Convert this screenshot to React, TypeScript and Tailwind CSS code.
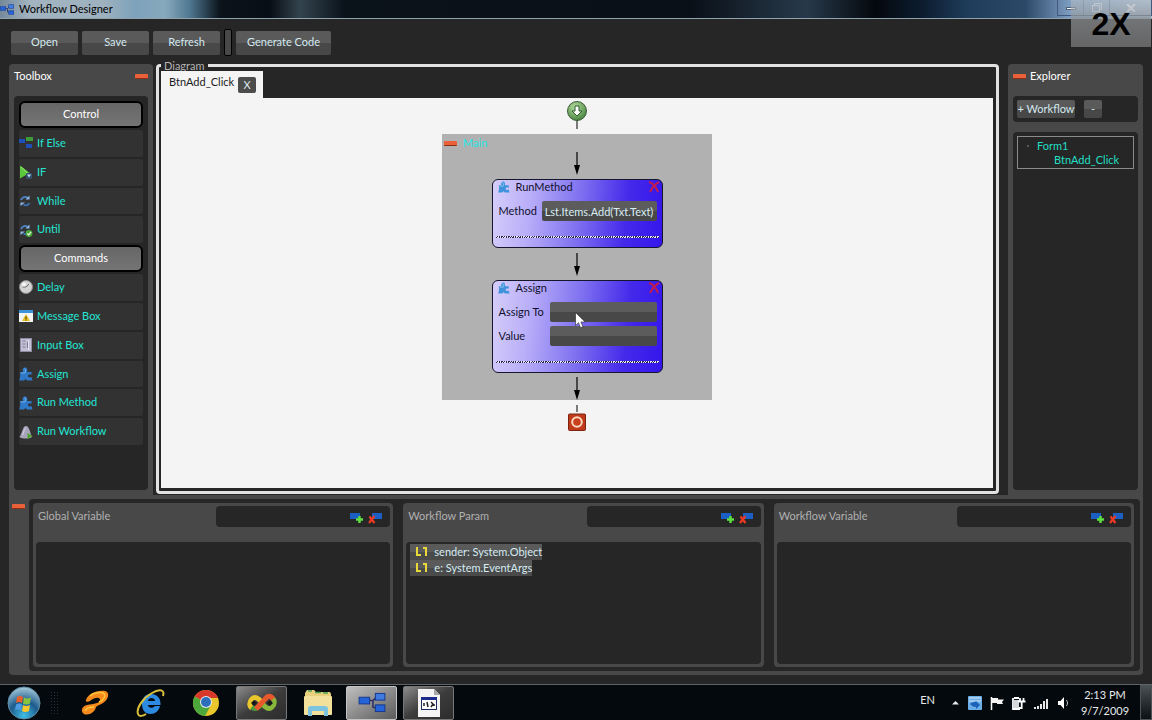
import { useState } from 'react';
import type { ReactNode } from 'react';

const CONTROLS = ['If Else', 'IF', 'While', 'Until'];
const COMMANDS = ['Delay', 'Message Box', 'Input Box', 'Assign', 'Run Method', 'Run Workflow'];

/* ---------- icons ---------- */

function FlowIcon({ className, accent = '#3f7be0' }: { className?: string; accent?: string }) {
  return (
    <svg viewBox="0 0 28 22" className={className} aria-hidden="true">
      <path d="M11 9h4M15 9l4-4M15 9v7l4 1" stroke="#2b2f66" strokeWidth="1.6" fill="none" />
      <rect x="0.5" y="5.5" width="11" height="7" fill="#2563d8" stroke="#14368c" />
      <rect x="17.5" y="1.5" width="10" height="7" fill={accent} stroke="#14368c" />
      <rect x="17.5" y="13.5" width="10" height="7" fill="#2563d8" stroke="#14368c" />
    </svg>
  );
}

function PuzzleIcon({ className, light }: { className?: string; light?: boolean }) {
  return (
    <svg viewBox="0 0 14 14" className={className} aria-hidden="true">
      <path
        d="M1 5h3C3 2.600 4.200 0.500 6 0.500s3 2.100 2 4.500h4.500v3c-1.800-.8-3.500-.4-3.500 1s1.700 1.800 3.500 1l1 3.500H8l-1.500-1.500L5 13.500H.3l1-4.500z"
        fill={light ? '#3f93dc' : '#2f78c8'}
      />
      <path d="M4.800 2.500c.6-.8 1.600-.6 2 .4L6 6H2" stroke={light ? '#8cc8f2' : '#6fb0ea'} fill="none" />
    </svg>
  );
}

function LoopIcon({ checked }: { checked?: boolean }) {
  return (
    <svg viewBox="0 0 14 14" className="size-[14px]" aria-hidden="true">
      <path d="M2 6c1.500-3 4.500-4 6.500-2" stroke="#4f86c6" strokeWidth="1.800" fill="none" />
      <path d="M6.500 5.500h4V1.500z" fill="#8ab4e6" />
      <path d="M10.500 9c-1.500 2.500-4 3-6 1.500" stroke="#3a70b4" strokeWidth="1.800" fill="none" />
      <path d="M6 8.500H1.500v3.500z" fill="#8ab4e6" />
      {checked && (
        <>
          <circle cx="10" cy="10.500" r="3.400" fill="#4aa53a" />
          <path d="M8.300 10.500l1.400 1.400 2.400-3" stroke="#e9ffe0" strokeWidth="1.200" fill="none" />
        </>
      )}
    </svg>
  );
}

function ToolIcon({ name }: { name: string }) {
  switch (name) {
    case 'If Else':
      return (
        <svg viewBox="0 0 14 14" className="size-[14px]" aria-hidden="true">
          <path d="M5 4.500h2v6h1M7 4.500V3" stroke="#2a2f4a" fill="none" />
          <rect x="0" y="3" width="6" height="4" fill="#1f4fb8" />
          <rect x="7" y="1" width="7" height="4" fill="#3f9a3a" />
          <rect x="7" y="8" width="6" height="4" fill="#1f4fb8" />
        </svg>
      );
    case 'IF':
      return (
        <svg viewBox="0 0 14 14" className="size-[14px]" aria-hidden="true">
          <path d="M1 0.500l11 8.500-5 1-6 3.500z" fill="#5cc83c" />
          <path d="M2 2l6 5.500" stroke="#a2ec7c" />
          <rect x="7" y="8" width="6" height="6" rx="1" fill="#35506e" />
          <path d="M8 9.500h4l-2 3z" fill="#c7ddf2" />
        </svg>
      );
    case 'While':
      return <LoopIcon />;
    case 'Until':
      return <LoopIcon checked />;
    case 'Delay':
      return (
        <svg viewBox="0 0 14 14" className="size-[14px]" aria-hidden="true">
          <circle cx="7" cy="7" r="6.500" fill="#d3d3d3" stroke="#8b8b8b" />
          <path d="M7 7l3-3M7 7H3.500" stroke="#6c6c6c" fill="none" />
          <circle cx="5" cy="4.500" r="2" fill="#f6f6f6" />
        </svg>
      );
    case 'Message Box':
      return (
        <svg viewBox="0 0 14 14" className="size-[14px]" aria-hidden="true">
          <rect x="0" y="1" width="14" height="12" fill="#f2f4f6" />
          <rect x="0" y="1" width="14" height="3" fill="#3d92dc" />
          <path d="M7 5l4 7H3z" fill="#e8c020" />
          <path d="M7 7.500v2.500M7 10.500v1" stroke="#3c3208" />
        </svg>
      );
    case 'Input Box':
      return (
        <svg viewBox="0 0 14 14" className="size-[14px]" aria-hidden="true">
          <rect x="1.500" y="0.500" width="11" height="13" fill="#c3bfd2" stroke="#8f8aa4" />
          <path d="M3.500 3h3M3.500 6h3M3.500 9h3M8.500 4v6" stroke="#7d7896" fill="none" />
          <path d="M9.500 2v10" stroke="#e6e3f0" />
        </svg>
      );
    case 'Run Workflow':
      return (
        <svg viewBox="0 0 14 14" className="size-[14px]" aria-hidden="true">
          <path d="M0.500 12C3 9 3.500 1 7 1s4 7 6 11c-3 2-10 2-12.500 0z" fill="#a9a3bb" />
          <path d="M3.500 10C5 7 5.500 3 7 3" stroke="#dcd8e8" fill="none" />
          <path d="M8.500 8l5 3-5 3z" fill="#4da52e" />
        </svg>
      );
    default:
      return <PuzzleIcon className="size-[14px]" />;
  }
}

function AddIcon() {
  return (
    <svg viewBox="0 0 14 12" className="h-3 w-[14px]" aria-hidden="true">
      <rect x="0" y="1" width="10" height="6" fill="#1c5fc4" />
      <path d="M9.500 4v7M6 7.500h7" stroke="#5ee040" strokeWidth="2.400" />
    </svg>
  );
}

function RemoveIcon() {
  return (
    <svg viewBox="0 0 14 12" className="h-3 w-[14px]" aria-hidden="true">
      <rect x="4" y="1" width="10" height="6" fill="#1c5fc4" />
      <path d="M1.500 4.500l5 6.500M6.500 4L1 11" stroke="#ee3a24" strokeWidth="2.200" />
    </svg>
  );
}

function CollapseButton({ label }: { label: string }) {
  return (
    <button
      aria-label={label}
      className="h-[5px] w-[13px] shrink-0 rounded-[1px] border-b border-[#8e2c12] bg-[#ea6038]"
    />
  );
}

/* ---------- shared pieces ---------- */

function GlossButton({ children, className = '' }: { children: ReactNode; className?: string }) {
  return (
    <button
      className={`flex items-center justify-center rounded-xs bg-linear-to-b from-[#5a5a5a] from-50% to-[#484848] to-50% text-[#d4e9f0] ${className}`}
    >
      {children}
    </button>
  );
}

function Arrow() {
  return (
    <svg viewBox="0 0 8 23" className="h-[23px] w-2" aria-hidden="true">
      <path d="M4 0v15" stroke="#000" strokeWidth="1.200" />
      <path d="M1 13h6L4 23z" fill="#000" />
    </svg>
  );
}

/* ---------- window chrome ---------- */

function TitleBar() {
  return (
    <header className="flex h-[19px] shrink-0 items-center justify-between border-b border-[#8fa3ae] bg-[linear-gradient(90deg,#75899a_0px,#a3b4c0_30px,#9db1bf_105px,#7da2bb_135px,#87a9bc_165px,#4f7790_190px,#0b131b_220px,#080e16_270px,#33434e_300px,#0a121a_345px,#0a1018_60%,#27394a_70%,#04080e_76%,#0c1c2e_80%,#1f3c5a_84%,#2c4968_89%,#7f9fc4_93%,#a9bfd6_100%)]">
      <div className="flex items-center gap-[5px]">
        <FlowIcon className="h-[11px] w-[14px]" />
        <h1 className="text-[11px] leading-4 text-black">Workflow Designer</h1>
      </div>
      <div className="flex h-4 w-[95px] self-start border-x border-b border-[#41597a] text-white">
        <button aria-label="Minimize" className="flex w-[26px] items-end justify-center border-r border-[#5f7898] pb-[5px]">
          <span className="h-[3px] w-[10px] border border-[#4c5f78] bg-white" />
        </button>
        <button aria-label="Restore" className="flex w-[26px] items-center justify-center border-r border-[#5f7898]">
          <svg viewBox="0 0 12 10" className="h-[10px] w-3" aria-hidden="true">
            <path d="M3.500 2V.5h7v6H9" stroke="#e6eef6" fill="none" />
            <rect x="1.500" y="2.500" width="7" height="6" stroke="#e6eef6" fill="none" />
          </svg>
        </button>
        <button aria-label="Close" className="flex flex-1 items-center justify-center">
          <svg viewBox="0 0 10 8" className="h-2 w-[10px]" aria-hidden="true">
            <path d="M1 0l8 8M9 0L1 8" stroke="#fff" strokeWidth="2" />
          </svg>
        </button>
      </div>
    </header>
  );
}

function Toolbar() {
  return (
    <nav className="flex h-[27px] shrink-0 items-center gap-1 px-[11px] text-[11px]">
      <GlossButton className="h-6 w-[67px]">Open</GlossButton>
      <GlossButton className="h-6 w-[67px]">Save</GlossButton>
      <GlossButton className="h-6 w-[67px]">Refresh</GlossButton>
      <span className="h-[27px] w-2 rounded-xs border border-black bg-[#484848]" />
      <GlossButton className="h-6 w-[95px]">Generate Code</GlossButton>
    </nav>
  );
}

/* ---------- side panels ---------- */

function ToolGroup({ title, items }: { title: string; items: string[] }) {
  return (
    <>
      <button className="rounded-md border-2 border-black bg-linear-to-b from-[#666] to-[#757575] text-center text-white">
        {title}
      </button>
      {items.map((item) => (
        <button key={item} className="flex items-center gap-1 rounded-xs bg-[#323232] text-left text-[#22e6d4]">
          <ToolIcon name={item} />
          {item}
        </button>
      ))}
    </>
  );
}

function Toolbox() {
  return (
    <aside className="flex w-36 shrink-0 flex-col rounded-t-sm bg-[#484848] px-[5px] pb-[5px] text-[11px]">
      <div className="flex h-8 items-center justify-between pb-2">
        <h2 className="text-white">Toolbox</h2>
        <CollapseButton label="Collapse toolbox" />
      </div>
      <div className="flex-1 rounded-sm bg-[#262626] px-[5px] pt-[5px]">
        <div className="grid h-[344px] auto-rows-fr gap-0.5">
          <ToolGroup title="Control" items={CONTROLS} />
          <ToolGroup title="Commands" items={COMMANDS} />
        </div>
      </div>
    </aside>
  );
}

function Explorer() {
  return (
    <aside className="flex w-[135px] shrink-0 flex-col rounded-t-sm bg-[#484848] px-[5px] pb-[5px] text-[11px]">
      <div className="flex h-8 items-center gap-1 pb-2">
        <CollapseButton label="Collapse explorer" />
        <h2 className="text-white">Explorer</h2>
      </div>
      <div className="flex h-[26px] items-center gap-[9px] rounded-sm bg-[#262626] px-1">
        <GlossButton className="h-[18px] w-[58px] whitespace-nowrap">+ Workflow</GlossButton>
        <GlossButton className="h-[18px] w-[18px]">-</GlossButton>
      </div>
      <div className="mt-[10px] flex-1 rounded-sm bg-[#262626] p-1">
        <ul className="border border-[#8a8a8a] pt-[2px] pb-px pl-[9px] leading-[14px] text-[#22dfc4]">
          <li>
            <div className="flex items-center gap-2">
              <span className="size-[2px] bg-[#555]" />
              <span>Form1</span>
            </div>
            <ul className="pl-[27px]">
              <li>BtnAdd_Click</li>
            </ul>
          </li>
        </ul>
      </div>
    </aside>
  );
}

/* ---------- diagram ---------- */

interface Field {
  id: string;
  label: string;
  value: string;
}

function ActivityCard({ title, fields, labelClass }: { title: string; fields: Field[]; labelClass: string }) {
  const [values, setValues] = useState(fields.map((f) => f.value));

  return (
    <section className="w-[171px] rounded-md border border-[#15152e] bg-[linear-gradient(96deg,#d6cefa_0%,#b9aef8_22%,#8072f0_50%,#4529ea_78%,#3416ec_100%)] text-[11px] text-[#10102c]">
      <div className="flex h-[14px] items-center pr-0.5 pl-[5px]">
        <PuzzleIcon light className="size-3" />
        <h3 className="flex-1 pl-[6px] leading-[14px]">{title}</h3>
        <button aria-label={`Remove ${title}`}>
          <svg viewBox="0 0 12 12" className="size-3" aria-hidden="true">
            <path d="M1 1c4 1 7 5 9 10M11 1C7 3 4 7 2 11" stroke="#c01c50" strokeWidth="2" fill="none" />
          </svg>
        </button>
      </div>
      <div className="flex flex-col gap-1 pt-[7px] pr-[5px] pl-[6px]">
        {fields.map((field, i) => (
          <div key={field.id} className="flex items-center">
            <label htmlFor={field.id} className={`shrink-0 whitespace-nowrap ${labelClass}`}>
              {field.label}
            </label>
            <input
              id={field.id}
              value={values[i]}
              onChange={(e) => setValues(values.map((v, n) => (n === i ? e.target.value : v)))}
              className="h-5 min-w-0 flex-1 rounded-xs bg-linear-to-b from-[#5c5c5c] from-50% to-[#484848] to-50% text-center text-[#d8eef4] outline-none"
            />
          </div>
        ))}
      </div>
      <div className="mx-[3px] mt-[15px] mb-[9px] h-[2px] bg-[repeating-linear-gradient(120deg,#e6e4fa_0px_1px,#2c2750_1px_2px)]" />
    </section>
  );
}

function Diagram() {
  return (
    <fieldset className="mx-[3px] mt-[-4px] mb-px flex min-w-0 flex-1 flex-col rounded-sm border-[3px] border-[#e2e2e2] pr-[3px] pb-[3px] pl-[2px]">
      <legend className="px-[3px] text-[11px] leading-[11px] text-[#b4b4b4]">Diagram</legend>
      <div className="flex h-full flex-col">
        <div className="flex h-[27px] w-[102px] shrink-0 items-center gap-1 bg-[#f4f4f4] pl-2 text-[11px] text-[#1c1c1c]">
          <span className="pb-1">BtnAdd_Click</span>
          <button aria-label="Close BtnAdd_Click" className="h-4 w-[18px] rounded-xs bg-[#4c4c4c] leading-4 text-[#dbe8ec]">
            X
          </button>
        </div>
        <div className="flex flex-1 flex-col items-center bg-[#f4f4f4] pt-[3px]">
          <svg viewBox="0 0 20 28" className="h-7 w-5" aria-hidden="true">
            <defs>
              <radialGradient id="start" cx="0.4" cy="0.3" r="0.8">
                <stop offset="0" stopColor="#b4dca0" />
                <stop offset="1" stopColor="#3c7a34" />
              </radialGradient>
            </defs>
            <path d="M10 18v10" stroke="#000" />
            <circle cx="10" cy="10" r="9.500" fill="url(#start)" stroke="#3d5c3a" />
            <path d="M8 5h4v5h3l-5 5-5-5h3z" fill="#fff" stroke="#2c5a2a" />
          </svg>
          <section className="mt-[5px] flex w-[270px] flex-col items-center bg-[#b1b1b1]">
            <div className="flex h-[18px] items-center gap-[6px] self-start pl-[2px]">
              <CollapseButton label="Collapse Main" />
              <h2 className="text-[11px] leading-[14px] text-[#1fe6e6]">Main</h2>
            </div>
            <Arrow />
            <div className="h-1" />
            <ActivityCard
              title="RunMethod"
              labelClass="w-[43px]"
              fields={[{ id: 'method', label: 'Method', value: 'Lst.Items.Add(Txt.Text)' }]}
            />
            <div className="pt-[5px] pb-1">
              <Arrow />
            </div>
            <div className="relative">
              <ActivityCard
                title="Assign"
                labelClass="w-[51px]"
                fields={[
                  { id: 'assign-to', label: 'Assign To', value: '' },
                  { id: 'assign-value', label: 'Value', value: '' },
                ]}
              />
              {/* mouse pointer */}
              <svg viewBox="0 0 11 17" className="absolute top-8 left-[83px] h-[17px] w-[11px]" aria-hidden="true">
                <path d="M.5.5v13l3-2.800 2 5 2.500-1-2.100-4.700h4.300z" fill="#fff" stroke="#222" strokeWidth=".6" />
              </svg>
            </div>
            <div className="pt-1">
              <Arrow />
            </div>
          </section>
          <svg viewBox="0 0 18 26" className="mt-[5px] h-[26px] w-[18px]" aria-hidden="true">
            <path d="M9 0v7" stroke="#000" />
            <rect x="0.500" y="9" width="17" height="16.500" rx="1" fill="#bf3a1a" stroke="#7c2410" />
            <circle cx="9" cy="17" r="4.800" fill="#c8401c" stroke="#fbd9c0" strokeWidth="2" />
          </svg>
        </div>
      </div>
    </fieldset>
  );
}

/* ---------- variables ---------- */

function VariablePanel({ title, items = [] }: { title: string; items?: string[] }) {
  return (
    <section className="flex flex-1 flex-col rounded-sm bg-[#484848] p-[3px] text-[11px]">
      <div className="flex h-[21px] items-center justify-between">
        <h2 className="pl-[2px] text-[#b0b0b0]">{title}</h2>
        <div className="flex h-[21px] w-[174px] items-center justify-end gap-1 rounded-sm bg-[#262626] pt-[3px] pr-2">
          <button aria-label={`Add to ${title}`}>
            <AddIcon />
          </button>
          <button aria-label={`Remove from ${title}`}>
            <RemoveIcon />
          </button>
        </div>
      </div>
      <ul className="mt-[15px] flex flex-1 flex-col items-start rounded-sm bg-[#262626] pt-[2px] pl-1">
        {items.map((item) => (
          <li key={item} className="flex h-4 items-center gap-[6px] bg-linear-to-b from-[#5a5a5a] from-50% to-[#4a4a4a] to-50% pl-[6px] text-[#d4ebf2]">
            <svg viewBox="0 0 12 10" className="h-[10px] w-3" aria-hidden="true">
              <path d="M1 0v8h4M7 1h3v8" stroke="#e8d83a" strokeWidth="2" fill="none" />
            </svg>
            {item}
          </li>
        ))}
      </ul>
    </section>
  );
}

function Variables() {
  return (
    <div className="mx-[9px] flex h-[180px] shrink-0 gap-[7px] rounded-b-sm bg-[#484848] pt-1 pr-[3px] pb-1">
      <div className="flex w-[13px] items-start pt-[5px] pl-[3px]">
        <CollapseButton label="Collapse variables" />
      </div>
      <div className="flex flex-1 gap-[10px] rounded-sm bg-[#262626] py-1 pr-[6px] pl-1">
        <VariablePanel title="Global Variable" />
        <VariablePanel title="Workflow Param" items={['sender: System.Object', 'e: System.EventArgs']} />
        <VariablePanel title="Workflow Variable" />
      </div>
    </div>
  );
}

/* ---------- taskbar ---------- */

function TaskButton({ label, active, children }: { label: string; active?: boolean; children: ReactNode }) {
  return (
    <button
      aria-label={label}
      className={`flex h-[34px] w-[51px] items-center justify-center rounded-xs border ${
        active
          ? 'border-[#c4c4c4] bg-linear-to-br from-[#c0c0c0] to-[#5c5c5c]'
          : 'border-[#777] bg-linear-to-br from-[#8c8c8c] via-[#3c3c3c] to-[#2c2c2c]'
      }`}
    >
      {children}
    </button>
  );
}

function Taskbar() {
  return (
    <footer className="flex h-9 shrink-0 items-center justify-between border-t border-[#5c6468] bg-[#04090d] pl-[7px]">
      <div className="flex items-center">
        <button aria-label="Start">
          <svg viewBox="0 0 34 34" className="size-[34px]" aria-hidden="true">
            <defs>
              <radialGradient id="orb" cx="0.5" cy="0.9" r="0.9">
                <stop offset="0" stopColor="#3fc0e8" />
                <stop offset="0.5" stopColor="#1c5a8c" />
                <stop offset="1" stopColor="#a8ccdc" />
              </radialGradient>
            </defs>
            <circle cx="17" cy="17" r="16" fill="url(#orb)" stroke="#5f8ea8" />
            <path d="M10 11c2-1.500 4-1.500 6 0l-1 6c-2-1.200-4-1.200-6 0z" fill="#e8602c" />
            <path d="M17 11.500c2 1.300 4.500 1.300 7 0l-1 6c-2.400 1.300-5 1.300-7 0z" fill="#86c440" />
            <path d="M9 18.500c2-1.300 4-1.300 6 0l-1 6c-2-1.200-4-1.200-6 0z" fill="#4c9ce0" />
            <path d="M16 19c2 1.300 4.500 1.300 7 0l-1 6c-2.400 1.300-5 1.300-7 0z" fill="#f6c62c" />
          </svg>
        </button>
        <span className="mx-[9px] h-6 w-[9px] bg-[radial-gradient(#2b3136_1px,transparent_1px)] bg-size-[3px_3px]" />
        <button aria-label="Media player" className="ml-[13px]">
          <svg viewBox="0 0 28 26" className="h-[26px] w-7" aria-hidden="true">
            <path
              d="M5 10C7 4 15 0 24 1c5 1 4 8-2 12-3 2-5 2-7 4-1 5-7 9-12 7-4-3-2-8 3-9 7-1 13-2 13-5 0-4-7-2-10 1-2 1-5 1-4-1z"
              fill="#f68a1c"
            />
            <path d="M9 6c4-3 9-4 13-3 4 2 1 7-4 9M4 21c1-3 5-4 9-4" stroke="#ffc43c" strokeWidth="1.500" fill="none" />
          </svg>
        </button>
        <button aria-label="Internet Explorer" className="ml-[27px]">
          <svg viewBox="0 0 30 30" className="size-[30px]" aria-hidden="true">
            <path
              d="M15 6c6 0 10 4 9.500 11H12c0 3 5 4 7 1h5c-1 5-5 8-9.500 8C9 26 6 22 6 16S9 6 15 6zm-3 7h7c0-4-7-4-7 0z"
              fill="#2c8ae0"
            />
            <path d="M27 8c2-6-3-8-11-3C7 10 0 20 2 26c1 3 5 2 8 0" stroke="#d8c03c" strokeWidth="2" fill="none" />
          </svg>
        </button>
        <button aria-label="Chrome" className="ml-[26px]">
          <svg viewBox="0 0 28 28" className="size-7" aria-hidden="true">
            <circle cx="14" cy="14" r="13" fill="#e8c62c" />
            <path d="M14 14L2.700 7.500A13 13 0 0 1 26 9H14z" fill="#d8382c" />
            <path d="M14 14L2.700 7.500A13 13 0 0 0 13 27l5.500-10z" fill="#4da83c" />
            <circle cx="14" cy="13" r="6" fill="#e8eef2" />
            <circle cx="14" cy="13" r="5" fill="#2c6fb8" />
          </svg>
        </button>
        <div className="ml-4">
          <TaskButton label="Expression">
            <svg viewBox="0 0 30 20" className="h-5 w-[30px]" aria-hidden="true">
              <path d="M15 10c-3-5-7-7-10-4s-3 7 0 9" stroke="#e8c62c" strokeWidth="5" fill="none" />
              <path d="M5 14c3 3 7 1 10-4" stroke="#4c9c3c" strokeWidth="5" fill="none" />
              <path d="M15 10c3 5 7 7 10 4s3-7 0-9" stroke="#8ab83c" strokeWidth="5" fill="none" />
              <path d="M9 16L20 4c2-1 4-1 6 2" stroke="#e8582c" strokeWidth="5" fill="none" />
              <path d="M4 10l3-3 3 3-3 3zM20 10l3-3 3 3-3 3z" fill="#181818" />
            </svg>
          </TaskButton>
        </div>
        <button aria-label="File explorer" className="ml-[16px]">
          <svg viewBox="0 0 30 28" className="h-7 w-[30px]" aria-hidden="true">
            <path d="M2 4l2-3h7l2 2h14l1 2v21H2z" fill="#e9d07c" />
            <rect x="1" y="7" width="28" height="19" rx="1" fill="#f3e09a" />
            <path d="M5 2h4M12 3.500h6M20 4h5" stroke="#4c9c54" strokeWidth="1.500" />
            <path d="M5 27v-7c0-2 1-3 3-3h14c2 0 3 1 3 3v7h-4v-5H9v5z" fill="#7cc4e0" />
          </svg>
        </button>
        <div className="ml-[13px] flex gap-[6px]">
          <TaskButton label="Workflow Designer" active>
            <FlowIcon className="h-[21px] w-7" />
          </TaskButton>
          <TaskButton label="Script file">
            <svg viewBox="0 0 22 28" className="h-7 w-[22px]" aria-hidden="true">
              <path d="M0 0h16l6 6v22H0z" fill="#f4f4f4" />
              <path d="M16 0v6h6z" fill="#a8a8a8" />
              <rect x="3.500" y="8.500" width="15" height="12" fill="#fff" stroke="#1c2c5c" />
              <rect x="3" y="8" width="16" height="3" fill="#1c2c8c" />
              <path d="M6 14v3M9 13l1 5M13 13l2 2-2 3M16 15v2" stroke="#222" fill="none" strokeWidth="1.500" />
            </svg>
          </TaskButton>
        </div>
      </div>

      <div className="flex h-full items-center text-[11px] text-[#e6eaec]">
        <button className="pr-[17px] pb-1">EN</button>
        <svg viewBox="0 0 100 16" className="h-4 w-[100px]" aria-hidden="true">
          <path d="M0 9.500l3.500-3.500L7 9.500z" fill="#e6eaec" />
          <rect x="16" y="1" width="14" height="14" rx="1" fill="#6caee8" />
          <path d="M17 6h12M17 3h12" stroke="#d6e8f6" />
          <path d="M18 9c3-3 5-1 6-3l4 4-4 4v-2c-3 0-4-1-6-3z" fill="#1c62b8" />
          <path d="M39.500 2v13" stroke="#fff" strokeWidth="1.500" />
          <path d="M40 3h6v1.500h6l-2 2.500 1 2h-6V8h-5z" fill="#f4f4f4" />
          <path d="M62 3h5M61 3v11h7" stroke="#fff" strokeWidth="1.800" fill="none" />
          <rect x="61" y="5" width="6" height="8" fill="#d4d8da" />
          <path d="M68 3v3M71.500 3v3M66 6.500h7.500M69.700 7v6h-3" stroke="#fff" strokeWidth="1.800" fill="none" />
          <path d="M83 14v-2M86 14v-3M89 14V9M92 14V6M95 14V4" stroke="#fff" strokeWidth="1.800" />
        </svg>
        <svg viewBox="0 0 12 14" className="ml-[6px] h-[14px] w-3" aria-hidden="true">
          <path d="M0 5h2.500L6 1v12L2.500 9H0z" fill="#fff" />
          <path d="M8.500 4c1.300 2 1.300 4 0 6" stroke="#c4cacc" fill="none" />
        </svg>
        <time className="w-[70px] text-center leading-4">
          2:13 PM
          <br />
          9/7/2009
        </time>
        <button
          aria-label="Show desktop"
          className="h-full w-3 border border-[#4c5458] bg-linear-to-b from-[#4a5054] to-[#0c1114]"
        />
      </div>
    </footer>
  );
}

export default function App() {
  return (
    <div className="relative flex min-h-screen flex-col overflow-hidden bg-[#262626] font-['Lato','Open_Sans',sans-serif]">
      <TitleBar />
      <div className="h-[10px] shrink-0" />
      <Toolbar />
      <div className="h-2 shrink-0" />
      <main className="flex flex-1 px-[9px]">
        <Toolbox />
        <Diagram />
        <div className="w-[6px] shrink-0" />
        <Explorer />
      </main>
      <Variables />
      <div className="h-[9px] shrink-0" />
      <Taskbar />
      {/* playback speed badge */}
      <div className="absolute top-0 right-px flex h-[47px] w-20 items-center justify-center bg-linear-to-b from-[#b4bcc4]/60 to-[#6c6c6c]/90 font-['Liberation_Sans',Arial,sans-serif] text-[32px] leading-8 font-bold text-black">
        2X
      </div>
    </div>
  );
}
